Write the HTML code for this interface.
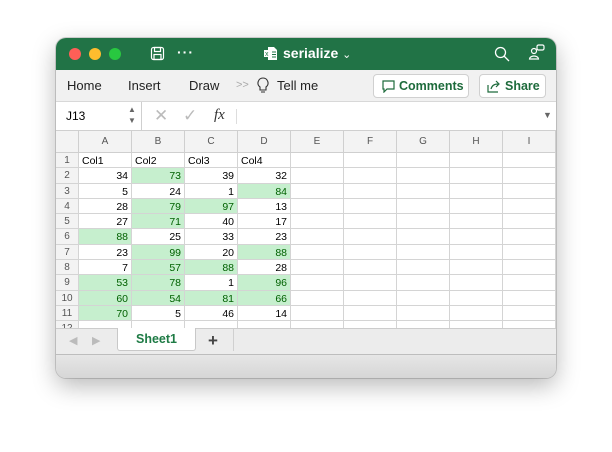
<!DOCTYPE html>
<html><head><style>
*{margin:0;padding:0;box-sizing:border-box}
body{width:612px;height:452px;background:#fff;font-family:"Liberation Sans",sans-serif;position:relative;overflow:hidden}
.win{position:absolute;left:56px;top:38px;width:500px;height:340px;border-radius:10px;overflow:hidden;background:#ececec;box-shadow:0 8px 24px rgba(0,0,0,.28),0 0 0 1px rgba(0,0,0,.15)}
.title{position:absolute;left:0;top:0;width:500px;height:32px;background:#217346}
.dot{position:absolute;top:10px;width:12px;height:12px;border-radius:50%}
.ribbon{position:absolute;top:32px;left:0;width:500px;height:31px;background:#f1f1f1;font-size:13px;color:#222}
.ribbon span{position:absolute;top:8px}
.btn{position:absolute;top:4px;height:24px;border:1px solid #d0d0d0;border-radius:4px;background:#fff;color:#1e6b3c;font-weight:bold;font-size:12.5px;line-height:22px}
.fbar{position:absolute;top:63px;left:0;width:500px;height:30px;background:#fff;border-top:1px solid #d8d8d8;border-bottom:1px solid #cfcfcf}
.grid{position:absolute;left:0;top:93px;width:500px;height:197px;display:grid;grid-template-columns:23px repeat(9,53px);grid-template-rows:22px repeat(12,15.3px);background:#fff;font-size:10.5px;overflow:hidden}
.grid div{border-right:1px solid #d4d4d4;border-bottom:1px solid #d4d4d4;line-height:16px;padding:0 3px;text-align:right;color:#000;white-space:nowrap}
.grid .h{background:#f3f3f3;text-align:center;color:#555;line-height:21px;border-color:#cfcfcf;font-size:10px}
.grid .r{background:#f3f3f3;text-align:center;color:#555;padding:0;font-size:10px}
.grid .l{text-align:left}
.grid .g{background:#c6efce;color:#006100}
.tabs{position:absolute;top:290px;left:0;width:500px;height:27px;background:#ececec;border-top:1px solid #ccc;border-bottom:1px solid #bdbdbd}
.bottom{position:absolute;top:317px;left:0;width:500px;height:23px;background:linear-gradient(#e6e6e6,#d6d6d6)}
</style></head><body>
<div class="win">
 <div class="title">
  <div class="dot" style="left:13px;background:#fe5f57"></div>
  <div class="dot" style="left:33px;background:#febc2e"></div>
  <div class="dot" style="left:53px;background:#28c840"></div>
  <svg style="position:absolute;left:94px;top:8px" width="15" height="15" viewBox="0 0 15 15" fill="none" stroke="#fff" stroke-width="1.2"><rect x="1.5" y="1.5" width="12" height="12" rx="2"/><rect x="4.5" y="1.5" width="6" height="4"/><rect x="4" y="8.5" width="7" height="5"/></svg>
  <div style="position:absolute;left:121px;top:6px;color:#fff;font-size:14px;font-weight:bold;letter-spacing:1px">···</div>
  <svg style="position:absolute;left:208px;top:8px" width="14" height="15" viewBox="0 0 14 15"><path d="M4 1h6l3 3v10H4z" fill="#fff"/><path d="M8 6h4M8 8.5h4M8 11h4" stroke="#217346" stroke-width="1"/><rect x="0" y="4" width="7" height="7" fill="#fff"/><text x="1" y="10" font-size="7" fill="#217346" font-family="Liberation Sans">x</text></svg>
  <div style="position:absolute;left:227px;top:7px;color:#fff;font-size:14px;font-weight:bold">serialize <span style="font-weight:normal;font-size:11px">⌄</span></div>
  <svg style="position:absolute;left:438px;top:8px" width="16" height="16" viewBox="0 0 16 16" fill="none" stroke="#fff" stroke-width="1.3"><circle cx="6.5" cy="6.5" r="5"/><path d="M10 10l5 5"/></svg>
  <svg style="position:absolute;left:472px;top:6px" width="17" height="18" viewBox="0 0 17 18" fill="none" stroke="#fff" stroke-width="1.2"><circle cx="6" cy="7" r="2.5"/><path d="M1.5 15a4.5 3 0 0 1 9 0z"/><rect x="9" y="1" width="7" height="5" rx="1.5"/></svg>
 </div>
 <div class="ribbon">
  <span style="left:11px">Home</span><span style="left:72px">Insert</span><span style="left:133px">Draw</span>
  <span style="left:180px;color:#aaa;font-size:11px;top:9px">&gt;&gt;</span>
  <svg style="position:absolute;left:201px;top:7px" width="12" height="17" viewBox="0 0 12 17" fill="none" stroke="#333" stroke-width="1.1"><path d="M6 1a5 5 0 0 0-3 9v3h6v-3a5 5 0 0 0-3-9zM4 15h4"/></svg>
  <span style="left:221px">Tell me</span>
  <div class="btn" style="left:317px;width:96px"><svg style="position:absolute;left:8px;top:5px" width="13" height="13" viewBox="0 0 13 13" fill="none" stroke="#1e6b3c" stroke-width="1.2"><path d="M1 1h11v8H5l-3 3V9H1z"/></svg><span style="position:absolute;left:25px;top:0">Comments</span></div>
  <div class="btn" style="left:423px;width:67px"><svg style="position:absolute;left:7px;top:5px" width="14" height="13" viewBox="0 0 14 13" fill="none" stroke="#1e6b3c" stroke-width="1.2"><path d="M1 5v7h10M4 9c1-4 4-5 7-5M9 1l3 3-3 3"/></svg><span style="position:absolute;left:25px;top:0">Share</span></div>
 </div>
 <div class="fbar">
  <div style="position:absolute;left:0;top:0;width:86px;height:28px;border-right:1px solid #cfcfcf;font-size:12px;padding:7px 10px">J13<span style="position:absolute;left:72px;top:2px;font-size:8px;color:#666;line-height:11px">▲<br>▼</span></div>
  <span style="position:absolute;left:98px;top:4px;color:#bbb;font-size:17px">✕</span>
  <span style="position:absolute;left:127px;top:4px;color:#bbb;font-size:17px">✓</span>
  <span style="position:absolute;left:158px;top:5px;font-family:'Liberation Serif',serif;font-style:italic;font-size:15px;color:#333">fx</span>
  <div style="position:absolute;left:180px;top:7px;width:1px;height:15px;background:#ddd"></div>
  <span style="position:absolute;left:487px;top:8px;color:#666;font-size:9px">▼</span>
 </div>
 <div class="grid">
  <div class="h"></div><div class="h">A</div><div class="h">B</div><div class="h">C</div><div class="h">D</div><div class="h">E</div><div class="h">F</div><div class="h">G</div><div class="h">H</div><div class="h">I</div>
  <div class="r">1</div><div class="l">Col1</div><div class="l">Col2</div><div class="l">Col3</div><div class="l">Col4</div><div></div><div></div><div></div><div></div><div></div>
  <div class="r">2</div><div>34</div><div class="g">73</div><div>39</div><div>32</div><div></div><div></div><div></div><div></div><div></div>
  <div class="r">3</div><div>5</div><div>24</div><div>1</div><div class="g">84</div><div></div><div></div><div></div><div></div><div></div>
  <div class="r">4</div><div>28</div><div class="g">79</div><div class="g">97</div><div>13</div><div></div><div></div><div></div><div></div><div></div>
  <div class="r">5</div><div>27</div><div class="g">71</div><div>40</div><div>17</div><div></div><div></div><div></div><div></div><div></div>
  <div class="r">6</div><div class="g">88</div><div>25</div><div>33</div><div>23</div><div></div><div></div><div></div><div></div><div></div>
  <div class="r">7</div><div>23</div><div class="g">99</div><div>20</div><div class="g">88</div><div></div><div></div><div></div><div></div><div></div>
  <div class="r">8</div><div>7</div><div class="g">57</div><div class="g">88</div><div>28</div><div></div><div></div><div></div><div></div><div></div>
  <div class="r">9</div><div class="g">53</div><div class="g">78</div><div>1</div><div class="g">96</div><div></div><div></div><div></div><div></div><div></div>
  <div class="r">10</div><div class="g">60</div><div class="g">54</div><div class="g">81</div><div class="g">66</div><div></div><div></div><div></div><div></div><div></div>
  <div class="r">11</div><div class="g">70</div><div>5</div><div>46</div><div>14</div><div></div><div></div><div></div><div></div><div></div>
  <div class="r">12</div><div></div><div></div><div></div><div></div><div></div><div></div><div></div><div></div><div></div>
 </div>
 <div class="tabs">
  <span style="position:absolute;left:13px;top:5px;color:#bbb;font-size:11px">◀</span>
  <span style="position:absolute;left:36px;top:5px;color:#bbb;font-size:11px">▶</span>
  <div style="position:absolute;left:61px;top:-1px;width:79px;height:23px;background:#fff;border:1px solid #c8c8c8;border-top:none;border-radius:0 0 3px 3px;color:#1e7b45;font-weight:bold;font-size:12.5px;text-align:center;line-height:22px">Sheet1</div>
  <span style="position:absolute;left:152px;top:2px;color:#444;font-size:17px;font-weight:bold">+</span>
  <div style="position:absolute;left:177px;top:0;width:1px;height:22px;background:#d0d0d0"></div>
 </div>
 <div class="bottom"></div>
</div>
</body></html>
